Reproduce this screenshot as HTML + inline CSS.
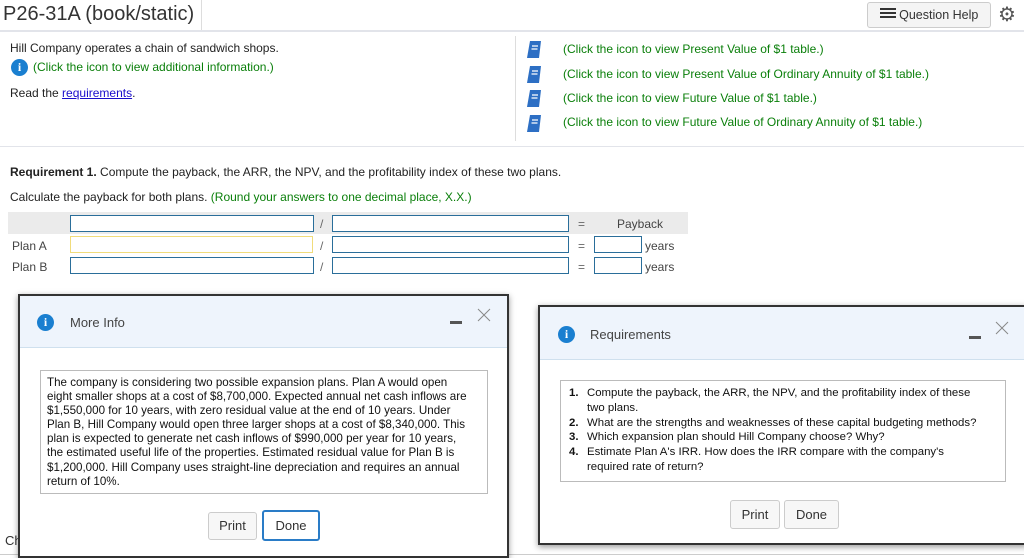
<!DOCTYPE html>
<html><head><meta charset="utf-8"><style>
*{box-sizing:border-box;margin:0;padding:0}
body{width:1024px;height:556px;overflow:hidden;background:#fff;font-family:"Liberation Sans",Arial,sans-serif;color:#222;position:relative;font-size:12px}
.a{position:absolute;white-space:nowrap}
.g{color:#0a7f0a}
.inp{position:absolute;height:17px;border:1px solid #2a6e9a;background:#fff}
.ic{position:absolute;width:17px;height:17px;border-radius:50%;background:#1a7fd0;color:#fff;font:bold 12px "Liberation Serif",serif;text-align:center;line-height:17px}
.btn{position:absolute;border:1px solid #ccc;border-radius:3px;background:#f7f7f7;font-size:13px;text-align:center;color:#333}
.dlg{position:absolute;border:2px solid #333;background:#fff;box-shadow:0 2px 6px rgba(0,0,0,.4)}
.hd{position:absolute;left:0;right:0;top:0;background:#eef4fc;border-bottom:1px solid #cfe0ee}
.book{position:absolute;width:14px;height:17px}
</style></head><body>
<div class="a" style="left:3px;top:3px;font-size:20px;color:#333">P26-31A (book/static)</div>
<div class="a" style="left:201px;top:0;width:1px;height:30px;background:#ddd"></div>
<div class="a" style="left:0;top:30px;width:1024px;height:2px;background:#e2e4ea"></div>
<div class="btn" style="left:867px;top:2px;width:124px;height:26px;line-height:24px;font-size:12.5px;background:#f4f4f4">
<span style="display:inline-block;width:16px;height:12px;vertical-align:-1px;background:repeating-linear-gradient(#333 0 2px,transparent 2px 4px)"></span> Question Help</div>
<div class="a" style="left:998px;top:2px;font-size:20px;color:#555">⚙</div>

<div class="a" style="left:10px;top:41px">Hill Company operates a chain of sandwich shops.</div>
<div class="ic" style="left:11px;top:59px">i</div>
<div class="a g" style="left:33px;top:60px">(Click the icon to view additional information.)</div>
<div class="a" style="left:10px;top:86px">Read the <span style="color:#1a0dcc;text-decoration:underline">requirements</span>.</div>
<div class="a" style="left:515px;top:36px;width:1px;height:105px;background:#ddd"></div>
<svg class="book" style="left:527px;top:41px" viewBox="0 0 14 17"><path d="M3 0h11l-2 17H0z" fill="#2d6fc4"/><path d="M5 5h6M4.5 8h6" stroke="#fff" stroke-width="1.3"/></svg>
<svg class="book" style="left:527px;top:66px" viewBox="0 0 14 17"><path d="M3 0h11l-2 17H0z" fill="#2d6fc4"/><path d="M5 5h6M4.5 8h6" stroke="#fff" stroke-width="1.3"/></svg>
<svg class="book" style="left:527px;top:90px" viewBox="0 0 14 17"><path d="M3 0h11l-2 17H0z" fill="#2d6fc4"/><path d="M5 5h6M4.5 8h6" stroke="#fff" stroke-width="1.3"/></svg>
<svg class="book" style="left:527px;top:115px" viewBox="0 0 14 17"><path d="M3 0h11l-2 17H0z" fill="#2d6fc4"/><path d="M5 5h6M4.5 8h6" stroke="#fff" stroke-width="1.3"/></svg>
<div class="a g" style="left:563px;top:42px">(Click the icon to view Present Value of $1 table.)</div>
<div class="a g" style="left:563px;top:67px">(Click the icon to view Present Value of Ordinary Annuity of $1 table.)</div>
<div class="a g" style="left:563px;top:91px">(Click the icon to view Future Value of $1 table.)</div>
<div class="a g" style="left:563px;top:115px">(Click the icon to view Future Value of Ordinary Annuity of $1 table.)</div>
<div class="a" style="left:0;top:146px;width:1024px;height:1px;background:#e2e4ea"></div>

<div class="a" style="left:10px;top:165px"><b>Requirement 1.</b> Compute the payback, the ARR, the NPV, and the profitability index of these two plans.</div>
<div class="a" style="left:10px;top:190px">Calculate the payback for both plans. <span class="g">(Round your answers to one decimal place, X.X.)</span></div>
<div class="a" style="left:8px;top:212px;width:680px;height:22px;background:#ebebeb"></div>
<div class="inp" style="left:70px;top:215px;width:244px"></div>
<div class="inp" style="left:332px;top:215px;width:237px"></div>
<div class="a" style="left:320px;top:217px;color:#666">/</div>
<div class="a" style="left:578px;top:217px;color:#666">=</div>
<div class="a" style="left:617px;top:217px;color:#444">Payback</div>
<div class="a" style="left:12px;top:239px;color:#444">Plan A</div>
<div class="inp" style="left:70px;top:236px;width:243px;border-color:#f1dc7b"></div>
<div class="a" style="left:320px;top:239px;color:#666">/</div>
<div class="inp" style="left:332px;top:236px;width:237px"></div>
<div class="a" style="left:578px;top:239px;color:#666">=</div>
<div class="inp" style="left:594px;top:236px;width:48px"></div>
<div class="a" style="left:645px;top:239px;color:#444">years</div>
<div class="a" style="left:12px;top:260px;color:#444">Plan B</div>
<div class="inp" style="left:70px;top:257px;width:244px"></div>
<div class="a" style="left:320px;top:260px;color:#666">/</div>
<div class="inp" style="left:332px;top:257px;width:237px"></div>
<div class="a" style="left:578px;top:260px;color:#666">=</div>
<div class="inp" style="left:594px;top:257px;width:48px"></div>
<div class="a" style="left:645px;top:260px;color:#444">years</div>

<div class="a" style="left:5px;top:533px;font-size:13px;color:#333">Ch</div>
<div class="a" style="left:0;top:554px;width:1024px;height:1px;background:#ccc"></div>

<div class="dlg" style="left:18px;top:294px;width:491px;height:264px">
<div class="hd" style="height:52px"></div>
<div class="ic" style="left:17px;top:18px">i</div>
<div class="a" style="left:50px;top:19px;font-size:13px;color:#444">More Info</div>
<div class="a" style="left:430px;top:25px;width:12px;height:3px;background:#555"></div>
<svg class="a" style="left:457px;top:12px" width="14" height="14"><path d="M1 1L13 13M13 1L1 13" stroke="#888" stroke-width="1"/></svg>
<div class="a" style="left:20px;top:74px;width:448px;height:124px;border:1px solid #bbb;padding:5px 6px;font-size:11.6px;line-height:14.1px;color:#111;overflow:hidden">The company is considering two possible expansion plans. Plan A would open<br>eight smaller shops at a cost of $8,700,000. Expected annual net cash inflows are<br>$1,550,000 for 10 years, with zero residual value at the end of 10 years. Under<br>Plan B, Hill Company would open three larger shops at a cost of $8,340,000. This<br>plan is expected to generate net cash inflows of $990,000 per year for 10 years,<br>the estimated useful life of the properties. Estimated residual value for Plan B is<br>$1,200,000. Hill Company uses straight-line depreciation and requires an annual<br>return of 10%.</div>
<div class="btn" style="left:188px;top:216px;width:49px;height:28px;line-height:26px">Print</div>
<div class="btn" style="left:242px;top:214px;width:58px;height:31px;line-height:27px;border:2px solid #2a7cc7;background:#fff">Done</div>
</div>

<div class="dlg" style="left:538px;top:305px;width:490px;height:240px">
<div class="hd" style="height:53px"></div>
<div class="ic" style="left:18px;top:19px">i</div>
<div class="a" style="left:50px;top:20px;font-size:13px;color:#444">Requirements</div>
<div class="a" style="left:429px;top:29px;width:12px;height:3px;background:#555"></div>
<svg class="a" style="left:455px;top:14px" width="14" height="14"><path d="M1 1L13 13M13 1L1 13" stroke="#888" stroke-width="1"/></svg>
<div class="a" style="left:20px;top:73px;width:446px;height:102px;border:1px solid #bbb;padding:5px 6px 0 26px;font-size:11.4px;line-height:14.8px;color:#111;overflow:hidden">
<div style="position:relative"><b style="position:absolute;left:-18px">1.</b>Compute the payback, the ARR, the NPV, and the profitability index of these<br>two plans.</div>
<div style="position:relative"><b style="position:absolute;left:-18px">2.</b>What are the strengths and weaknesses of these capital budgeting methods?</div>
<div style="position:relative"><b style="position:absolute;left:-18px">3.</b>Which expansion plan should Hill Company choose? Why?</div>
<div style="position:relative"><b style="position:absolute;left:-18px">4.</b>Estimate Plan A's IRR. How does the IRR compare with the company's<br>required rate of return?</div>
</div>
<div class="btn" style="left:190px;top:193px;width:50px;height:29px;line-height:27px">Print</div>
<div class="btn" style="left:244px;top:193px;width:55px;height:29px;line-height:27px">Done</div>
</div>
</body></html>
